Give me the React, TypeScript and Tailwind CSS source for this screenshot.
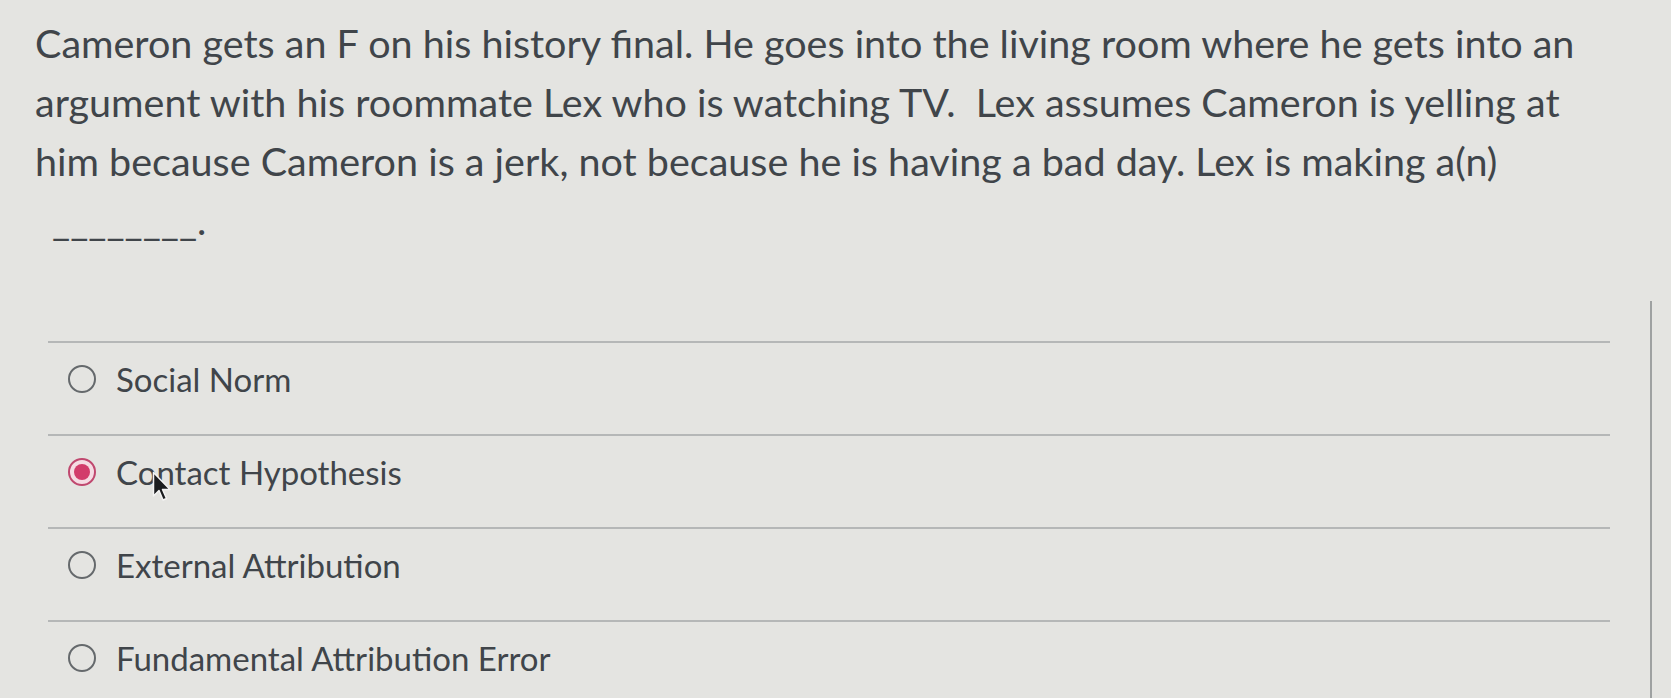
import { useState } from 'react';

const options = ['Social Norm', 'Contact Hypothesis', 'External Attribution', 'Fundamental Attribution Error'];

function Radio({ checked }: { checked: boolean }) {
  if (checked) {
    return (
      <span className="flex h-[28px] w-[28px] shrink-0 items-center justify-center rounded-full border-2 border-[#c0486f] bg-[#f5dbe3]">
        <span className="h-[16px] w-[16px] rounded-full bg-[#d23c6b]" />
      </span>
    );
  }
  return <span className="h-[28px] w-[28px] shrink-0 rounded-full border-2 border-[#65696c]" />;
}

export default function App() {
  const [selected, setSelected] = useState(1);

  return (
    <div className="flex min-h-screen w-full bg-[#e4e4e1] font-['Lato','Liberation_Sans',sans-serif] text-[#40454a]">
      <div className="relative flex w-[1652px] flex-col pl-[35px] pt-[13px]">
        <p className="text-[39.5px] leading-[59px]">
          Cameron gets an F on his history final. He goes into the living room where he gets into an
          <br />
          argument with his roommate Lex who is watching TV.&nbsp; Lex assumes Cameron is yelling at
          <br />
          him because Cameron is a jerk, not because he is having a bad day. Lex is making a(n)
          <br />
          <span className="ml-[17px]">________.</span>
        </p>

        <div className="-ml-[35px] mt-[52px] flex-1 border-r-2 border-[#9ea1a1] pl-[48px] pt-[40px]">
          <div className="w-[1562px]">
            {options.map((opt, i) => (
              <label
                key={opt}
                onClick={() => setSelected(i)}
                className="flex h-[93px] cursor-pointer items-start border-t-2 border-[#b5b7b7] pt-[16px]"
              >
                <span className="flex h-[40px] items-center gap-[20px] pl-[20px]">
                  <Radio checked={selected === i} />
                  <span className="text-[33px] leading-[40px]">{opt}</span>
                </span>
              </label>
            ))}
          </div>
        </div>

        {/* mouse pointer over the selected answer */}
        <svg className="absolute left-[152px] top-[471px]" width="23" height="32" viewBox="0 0 23 32">
          <path d="M1.5 1.5 L1.5 25 L7 19.5 L11 29 L14.5 27.5 L10.5 18.5 L18 18.5 Z" fill="#1b1d1f" stroke="#f4f4f4" strokeWidth="1.5" strokeLinejoin="round" />
        </svg>
      </div>
    </div>
  );
}
